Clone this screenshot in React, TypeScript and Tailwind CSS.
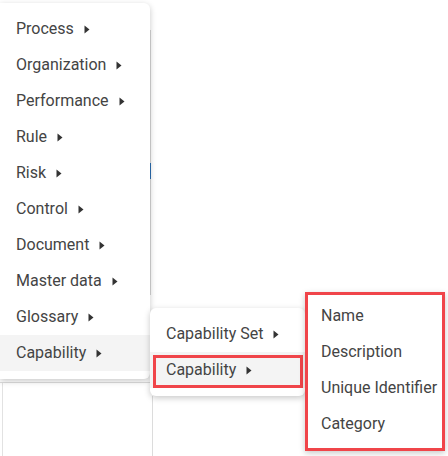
const font = { fontFamily: "Roboto, 'Liberation Sans', sans-serif" };

function Caret() {
  return (
    <svg width="6" height="9" viewBox="0 0 6 9" className="ml-[10px] shrink-0">
      <path d="M0.5 0.5 L5.5 4.5 L0.5 8.5 Z" fill="#333333" />
    </svg>
  );
}

type ItemProps = {
  label: string;
  sub?: boolean;
  active?: boolean;
};

function MenuItem({ label, sub, active }: ItemProps) {
  return (
    <div
      className={`flex h-9 items-center whitespace-nowrap px-4 text-base text-[#444444] ${
        active ? "bg-[#f4f4f4]" : ""
      }`}
    >
      <span>{label}</span>
      {sub ? <Caret /> : null}
    </div>
  );
}

const mainItems = [
  "Process",
  "Organization",
  "Performance",
  "Rule",
  "Risk",
  "Control",
  "Document",
  "Master data",
  "Glossary",
  "Capability",
];

const fields = ["Name", "Description", "Unique Identifier", "Category"];

export default function App() {
  return (
    <div className="relative h-[456px] w-[448px] overflow-hidden bg-white" style={font}>
      {/* page content peeking out behind the menus */}
      <div className="absolute left-[150px] top-[30px] h-[265px] w-px bg-[#d6d6d6]" />
      <div className="absolute left-[150px] top-[163px] h-[16px] w-px bg-[#2a6db0]" />
      <div className="absolute left-0 top-[382px] h-px w-[150px] bg-[#dddddd]" />
      <div className="absolute left-[2px] top-[383px] h-[73px] w-px bg-[#e2e2e2]" />
      <div className="absolute left-[152px] top-[396px] h-[60px] w-px bg-[#dcdcdc]" />

      {/* first level */}
      <div className="absolute left-0 top-[3px] w-[150px] rounded-r-md bg-white py-2 shadow-[0_2px_6px_rgba(0,0,0,0.22)]">
        {mainItems.map((label) => (
          <MenuItem key={label} label={label} sub active={label === "Capability"} />
        ))}
      </div>

      {/* second level */}
      <div className="absolute left-[150px] top-[308px] w-[155px] rounded-md bg-white py-2 shadow-[0_2px_6px_rgba(0,0,0,0.22)]">
        <MenuItem label="Capability Set" sub />
        <MenuItem label="Capability" sub active />
        <div className="pointer-events-none absolute left-[3px] top-[47px] h-[33px] w-[150px] border-[3px] border-[#f0454a]" />
      </div>

      {/* third level */}
      <div className="absolute left-[305px] top-[292px] w-[140px] border-[3px] border-[#f0454a] bg-white pb-[6px] pt-[3px] shadow-[0_2px_6px_rgba(0,0,0,0.22)]">
        {fields.map((label) => (
          <div key={label} className="flex h-9 items-center whitespace-nowrap px-[13px] text-base text-[#444444]">
            {label}
          </div>
        ))}
      </div>
    </div>
  );
}
